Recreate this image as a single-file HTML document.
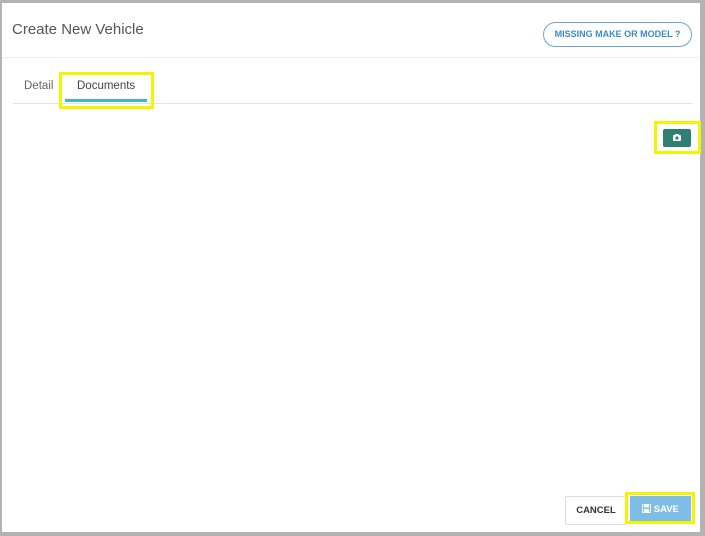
<!DOCTYPE html><html><head><style>
body{margin:0;width:705px;height:536px;background:#b3b3b3;position:relative;overflow:hidden;font-family:"Liberation Sans",sans-serif}
.m{position:absolute;left:2px;top:3px;width:698px;height:529px;background:#fff}
.t{position:absolute;left:10px;top:18px;font-size:15px;color:#555}
.mm{position:absolute;left:541px;top:19px;width:147px;height:23px;border:1px solid #6aa8d0;border-radius:13px;font-size:9px;font-weight:bold;color:#3a8cc4;text-align:center;line-height:23px}
.hr1{position:absolute;left:0;top:54px;width:698px;height:1px;background:#eee}
.tab{position:absolute;top:77px;font-size:11.5px;color:#666}
.ul{position:absolute;left:63px;top:96px;width:82px;height:3px;background:#3fb8c4}
.hr2{position:absolute;left:11px;top:100px;width:680px;height:1px;background:#e3e3e3}
.y{position:absolute;border:3px solid #f4f400;box-sizing:border-box}
.cam{position:absolute;left:661px;top:126px;width:28px;height:18px;background:#2f7f74;border-radius:2px}
.btn{position:absolute;top:493px;height:27px;font-size:9.5px;font-weight:bold;text-align:center;line-height:27px}
</style></head><body>
<div class="m">
<div class="t">Create New Vehicle</div>
<div class="mm">MISSING MAKE OR MODEL ?</div>
<div class="hr1"></div>
<div class="tab" style="left:22px">Detail</div>
<div class="tab" style="left:75px;color:#444">Documents</div>
<div class="ul"></div>
<div class="hr2"></div>
<div class="cam"><svg width="28" height="18" viewBox="0 0 28 18"><rect x="10" y="6" width="8" height="6" rx="1" fill="#fff"/><rect x="12" y="5" width="4" height="2" fill="#fff"/><circle cx="14" cy="9" r="1.6" fill="#2f7f74"/></svg></div>
<div class="btn" style="left:563px;width:60px;border:1px solid #ddd;border-radius:2px;color:#333">CANCEL</div>
<div class="btn" style="left:628px;width:61px;background:#7fbde6;color:#fff"><svg width="9" height="9" viewBox="0 0 9 9" style="vertical-align:-1px"><rect x="0.5" y="0.5" width="8" height="8" rx="1" fill="none" stroke="#fff"/><rect x="2" y="1" width="5" height="2.5" fill="#fff"/><rect x="2" y="5" width="5" height="3" fill="#fff"/></svg> SAVE</div>
</div>
<div class="y" style="left:59px;top:72px;width:95px;height:37px"></div>
<div class="y" style="left:654px;top:121px;width:47px;height:33px"></div>
<div class="y" style="left:625px;top:492px;width:70px;height:32px"></div>
</body></html>
